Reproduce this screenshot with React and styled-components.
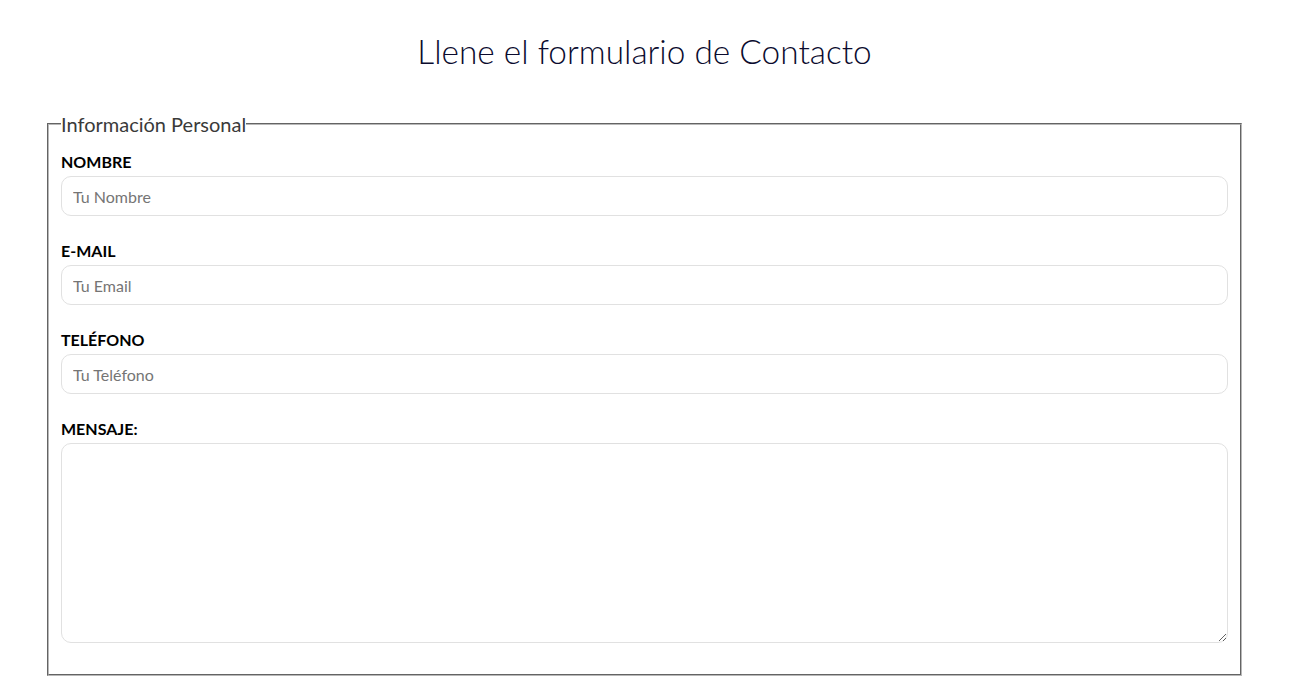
import React from 'react';
import styled, { createGlobalStyle } from 'styled-components';

const GlobalStyle = createGlobalStyle`
  body {
    margin: 0;
    background: #fff;
    font-family: Lato, "Open Sans", sans-serif;
  }
`;

const Page = styled.main`
  width: 1195px;
  margin-left: 47px;
  padding-bottom: 4px;
`;

const Title = styled.h1`
  margin: 0;
  padding: 27px 0 37px;
  text-align: center;
  font-weight: 300;
  font-size: 33.4px;
  line-height: 48px;
  color: #0b0b2e;
`;

const Fieldset = styled.fieldset`
  margin: 0;
  padding: 0 12px 31px;
  border: 2px groove #b8b8b8;
`;

const Legend = styled.legend`
  padding: 0;
  font-size: 20px;
  line-height: 24px;
  color: #3a3a3a;
`;

const Field = styled.div`
  display: flex;
  flex-direction: column;
  gap: 4px;
  margin-top: ${(p) => (p.first ? '16px' : '25px')};
`;

const Label = styled.label`
  font-size: 16px;
  font-weight: 700;
  line-height: 20px;
  color: #000;
  text-transform: uppercase;
`;

const Input = styled.input`
  box-sizing: border-box;
  width: 100%;
  height: 40px;
  padding: 0 11px;
  border: 1px solid #e1e1e1;
  border-radius: 10px;
  font-family: inherit;
  font-size: 16px;
  color: #333;
  outline: none;
  &::placeholder {
    color: #757575;
  }
`;

const TextArea = styled.textarea`
  box-sizing: border-box;
  width: 100%;
  height: 200px;
  padding: 10px 11px;
  border: 1px solid #e1e1e1;
  border-radius: 10px;
  font-family: inherit;
  font-size: 16px;
  outline: none;
  resize: vertical;
`;

const fields = [
  { id: 'nombre', label: 'Nombre', placeholder: 'Tu Nombre', type: 'text' },
  { id: 'email', label: 'E-mail', placeholder: 'Tu Email', type: 'email' },
  { id: 'telefono', label: 'Teléfono', placeholder: 'Tu Teléfono', type: 'tel' },
];

const App = () => {
  return (
    <>
      <GlobalStyle />
      <Page>
        <Title>Llene el formulario de Contacto</Title>
        <form>
          <Fieldset>
            <Legend>Información Personal</Legend>
            {fields.map((f, i) => (
              <Field key={f.id} first={i === 0}>
                <Label htmlFor={f.id}>{f.label}</Label>
                <Input id={f.id} type={f.type} placeholder={f.placeholder} />
              </Field>
            ))}
            <Field>
              <Label htmlFor="mensaje">Mensaje:</Label>
              <TextArea id="mensaje" />
            </Field>
          </Fieldset>
        </form>
      </Page>
    </>
  );
};

export default App;
